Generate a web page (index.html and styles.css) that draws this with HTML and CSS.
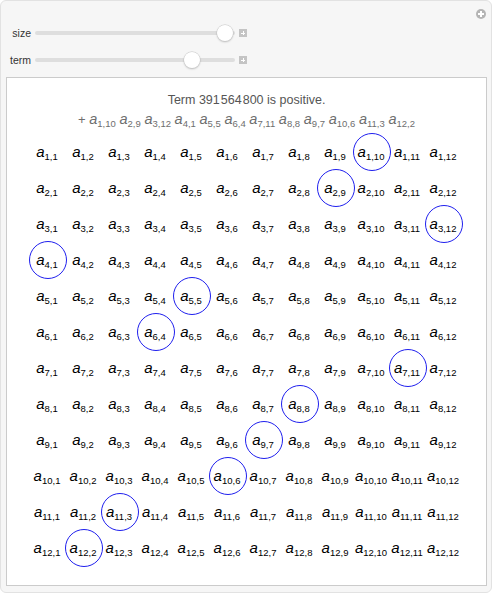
FILE: index.html
```html
<!DOCTYPE html>
<html>
<head>
<meta charset="utf-8">
<link rel="stylesheet" href="styles.css">
</head>
<body>
<div class="window">
  <div class="corner-btn"><span class="plus-h"></span><span class="plus-v"></span></div>
  <div class="controls">
    <div class="ctl-row">
      <div class="ctl-label">size</div>
      <div class="track"><div class="thumb" style="left:95%"></div></div>
      <div class="plus-box"><span class="plus-h"></span><span class="plus-v"></span></div>
    </div>
    <div class="ctl-row">
      <div class="ctl-label">term</div>
      <div class="track"><div class="thumb" style="left:78.5%"></div></div>
      <div class="plus-box"><span class="plus-h"></span><span class="plus-v"></span></div>
    </div>
  </div>
  <div class="panel">
    <div class="title">Term 391&#8202;564&#8202;800 is positive.</div>
    <div class="formula">+ <i>a</i><sub>1,10</sub> <i>a</i><sub>2,9</sub> <i>a</i><sub>3,12</sub> <i>a</i><sub>4,1</sub> <i>a</i><sub>5,5</sub> <i>a</i><sub>6,4</sub> <i>a</i><sub>7,11</sub> <i>a</i><sub>8,8</sub> <i>a</i><sub>9,7</sub> <i>a</i><sub>10,6</sub> <i>a</i><sub>11,3</sub> <i>a</i><sub>12,2</sub></div>
    <div class="grid" id="grid"></div>
  </div>
</div>
<script src="script.js"></script>
</body>
</html>
```
FILE: script.js
```js
(function () {
  var sel = {1: 10, 2: 9, 3: 12, 4: 1, 5: 5, 6: 4, 7: 11, 8: 8, 9: 7, 10: 6, 11: 3, 12: 2};
  var g = document.getElementById('grid');
  var html = '';
  for (var r = 1; r <= 12; r++) {
    for (var c = 1; c <= 12; c++) {
      html += '<div class="cell' + (sel[r] === c ? ' marked' : '') + '"><span class="term"><i>a</i><sub>' + r + ',' + c + '</sub></span></div>';
    }
  }
  g.innerHTML = html;
})();
```
FILE: styles.css
```css
html, body {
  margin: 0;
  padding: 0;
  background: #ffffff;
}
body {
  font-family: "Liberation Sans", Arial, sans-serif;
}
.window {
  position: relative;
  box-sizing: border-box;
  width: 492px;
  height: 593px;
  border: 1px solid #e2e2e2;
  border-radius: 6px;
  background: #f6f6f6;
}
.corner-btn {
  position: absolute;
  left: 475px;
  top: 8px;
  width: 10px;
  height: 10px;
  border-radius: 50%;
  background: #b4b4b4;
}
.plus-h, .plus-v {
  position: absolute;
  background: #ffffff;
}
.corner-btn .plus-h { left: 2px; top: 4px; width: 6px; height: 2px; }
.corner-btn .plus-v { left: 4px; top: 2px; width: 2px; height: 6px; }
.controls {
  padding-top: 24px;
  display: flex;
  flex-direction: column;
  gap: 11px;
}
.ctl-row {
  display: flex;
  align-items: center;
  height: 16px;
}
.ctl-label {
  width: 30px;
  text-align: right;
  font-size: 10.5px;
  color: #333333;
}
.track {
  position: relative;
  margin-left: 4px;
  width: 200px;
  height: 4px;
  border-radius: 2px;
  background: #dedede;
}
.thumb {
  position: absolute;
  top: -6px;
  width: 16px;
  height: 16px;
  margin-left: -8px;
  border-radius: 50%;
  background: #ffffff;
  box-shadow: 0 0 0 0.5px #c8c8c8, 0 1px 2px rgba(0,0,0,0.25);
}
.plus-box {
  position: relative;
  margin-left: 4px;
  width: 8px;
  height: 8px;
  background: #c4c4c4;
}
.plus-box .plus-h { left: 2px; top: 3.5px; width: 4px; height: 1px; }
.plus-box .plus-v { left: 3.5px; top: 2px; width: 1px; height: 4px; }
.panel {
  box-sizing: border-box;
  margin-top: 9px;
  margin-left: 5px;
  width: 481px;
  height: 509px;
  border: 1px solid #cbcbcb;
  background: #ffffff;
  padding: 14px 0 0 22px;
}
.title {
  margin-left: -22px;
  height: 16px;
  line-height: 16px;
  text-align: center;
  font-size: 12.5px;
  color: #555555;
}
.formula {
  margin-left: -22px;
  margin-top: 2px;
  height: 18px;
  line-height: 18px;
  text-align: center;
  font-size: 13px;
  color: #6e6e6e;
  white-space: nowrap;
}
.formula i {
  font-style: italic;
  font-size: 14.5px;
}
.formula sub {
  font-size: 9.5px;
  vertical-align: -3px;
  line-height: 0;
}
.grid {
  margin-top: 6px;
  display: grid;
  grid-template-columns: repeat(12, 36px);
  grid-auto-rows: 36px;
}
.cell {
  position: relative;
  display: flex;
  align-items: center;
  justify-content: center;
  color: #000000;
  white-space: nowrap;
}
.term {
  font-size: 15px;
  line-height: 16px;
}
.term i {
  font-style: italic;
}
.term sub {
  font-size: 9.5px;
  vertical-align: -3px;
  line-height: 0;
}
.cell.marked::after {
  content: "";
  position: absolute;
  left: 0;
  top: -1px;
  width: 36px;
  height: 36px;
  border: 1.2px solid #1f1fee;
  border-radius: 50%;
}
```
